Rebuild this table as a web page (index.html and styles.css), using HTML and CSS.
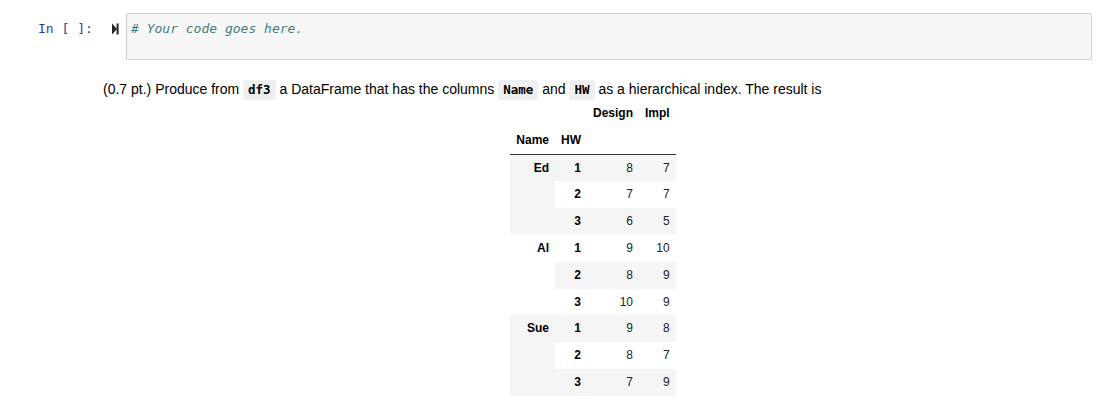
FILE: index.html
```html
<!DOCTYPE html>
<html>
<head>
<meta charset="utf-8">
<link rel="stylesheet" href="styles.css">
</head>
<body>
<div class="code-cell">
  <div class="prompt">In [ ]:</div>
  <div class="run-btn">
    <svg width="8" height="12" viewBox="0 0 8 12"><polygon points="0,0.5 5,6 0,11.5" fill="#222"/><rect x="4.6" y="0.5" width="2" height="11" fill="#222"/></svg>
  </div>
  <div class="input-area"><span class="comment"># Your code goes here.</span></div>
</div>

<div class="text-cell">
  <p class="question">(0.7 pt.) Produce from <code>df3</code> a DataFrame that has the columns <code>Name</code> and <code>HW</code> as a hierarchical index. The result is</p>
  <table class="df">
    <thead>
      <tr><th></th><th></th><th>Design</th><th>Impl</th></tr>
      <tr><th>Name</th><th>HW</th><th></th><th></th></tr>
    </thead>
    <tbody>
      <tr><th rowspan="3" class="grp">Ed</th><th>1</th><td>8</td><td>7</td></tr>
      <tr><th>2</th><td>7</td><td>7</td></tr>
      <tr><th>3</th><td>6</td><td>5</td></tr>
      <tr><th rowspan="3" class="grp">Al</th><th>1</th><td>9</td><td>10</td></tr>
      <tr><th>2</th><td>8</td><td>9</td></tr>
      <tr><th>3</th><td>10</td><td>9</td></tr>
      <tr><th rowspan="3" class="grp">Sue</th><th>1</th><td>9</td><td>8</td></tr>
      <tr><th>2</th><td>8</td><td>7</td></tr>
      <tr><th>3</th><td>7</td><td>9</td></tr>
    </tbody>
  </table>
</div>
</body>
</html>
```

FILE: styles.css
```css
html, body {
  margin: 0;
  padding: 0;
  background: #ffffff;
}

body {
  font-family: "Liberation Sans", Arial, sans-serif;
  color: #000;
}

.code-cell {
  display: flex;
  align-items: flex-start;
  padding-top: 13px;
  padding-right: 13px;
}

.prompt {
  box-sizing: border-box;
  width: 112px;
  padding-left: 38px;
  padding-top: 7px;
  font-family: "DejaVu Sans Mono", monospace;
  font-size: 13px;
  line-height: 18px;
  color: #303f9f;
}

.run-btn {
  width: 14px;
  padding-top: 10px;
  line-height: 0;
}

.input-area {
  flex: 1;
  height: 45px;
  box-sizing: content-box;
  background: #f7f7f7;
  border: 1px solid #cfcfcf;
  border-radius: 2px;
  padding: 0 4px;
}

.comment {
  display: block;
  padding-top: 6px;
  font-family: "DejaVu Sans Mono", monospace;
  font-style: italic;
  font-size: 13px;
  line-height: 18px;
  color: #408080;
}

.text-cell {
  padding: 0 22px 0 103px;
  margin-top: 19px;
}

.question {
  margin: 0;
  font-size: 14px;
  line-height: 21px;
  color: #000;
}

.question code {
  font-family: "DejaVu Sans Mono", monospace;
  font-weight: bold;
  font-size: 12.5px;
  background: #eff0f1;
  padding: 2px 5px 3px;
  border-radius: 2px;
  color: #000;
}

.df {
  margin: 0 auto;
  border-collapse: collapse;
  border-spacing: 0;
  font-size: 12px;
  color: #000;
}

.df th, .df td {
  text-align: right;
  vertical-align: middle;
  padding: 6px 6px;
  line-height: 14.8px;
  border: none;
}

.df th {
  font-weight: bold;
}

.df td {
  font-weight: normal;
  color: #222;
}

.df thead {
  border-bottom: 1px solid #3a3a3a;
}

.df tbody tr:nth-child(odd) {
  background: #f5f5f5;
}

.df th.grp {
  vertical-align: top;
}
```
